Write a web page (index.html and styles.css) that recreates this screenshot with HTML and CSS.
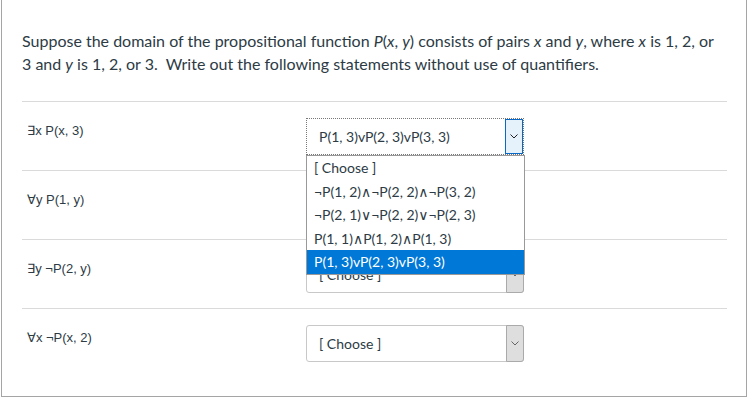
FILE: index.html
```html
<!DOCTYPE html>
<html lang="en">
<head>
    <meta charset="UTF-8">
    <title>Quiz question</title>
    <link rel="stylesheet" href="styles.css">
</head>
<body>
    <div class="question">
        <p class="prompt">Suppose the domain of the propositional function <i>P</i>(<i>x</i>, <i>y</i>) consists of pairs <i>x</i> and <i>y</i>, where <i>x</i> is 1, 2, or 3 and <i>y</i> is 1, 2, or 3.&nbsp; Write out the following statements without use of quantifiers.</p>

        <div class="answer-row">
            <div class="answer-label">∃x P(x, 3)</div>
            <div class="answer-cell">
                <div class="fake-select focused">
                    <span class="sel-text">P(1, 3)vP(2, 3)vP(3, 3)</span>
                    <span class="sel-arrow"><svg width="8" height="5" viewBox="0 0 8 5"><path d="M0.5 0.5 L4 4 L7.5 0.5" fill="none" stroke="#222" stroke-width="1"/></svg></span>
                </div>
                <ul class="dropdown">
                    <li>[ Choose ]</li>
                    <li>¬P(1, 2)∧¬P(2, 2)∧¬P(3, 2)</li>
                    <li>¬P(2, 1)∨¬P(2, 2)∨¬P(2, 3)</li>
                    <li>P(1, 1)∧P(1, 2)∧P(1, 3)</li>
                    <li class="active">P(1, 3)vP(2, 3)vP(3, 3)</li>
                </ul>
            </div>
        </div>

        <div class="answer-row">
            <div class="answer-label">∀y P(1, y)</div>
            <div class="answer-cell">
                <div class="fake-select">
                    <span class="sel-text">[ Choose ]</span>
                    <span class="sel-arrow"><svg width="8" height="5" viewBox="0 0 8 5"><path d="M0.5 0.5 L4 4 L7.5 0.5" fill="none" stroke="#666" stroke-width="1"/></svg></span>
                </div>
            </div>
        </div>

        <div class="answer-row">
            <div class="answer-label">∃y ¬P(2, y)</div>
            <div class="answer-cell">
                <div class="fake-select">
                    <span class="sel-text">[ Choose ]</span>
                    <span class="sel-arrow"><svg width="8" height="5" viewBox="0 0 8 5"><path d="M0.5 0.5 L4 4 L7.5 0.5" fill="none" stroke="#666" stroke-width="1"/></svg></span>
                </div>
            </div>
        </div>

        <div class="answer-row last">
            <div class="answer-label">∀x ¬P(x, 2)</div>
            <div class="answer-cell">
                <div class="fake-select">
                    <span class="sel-text">[ Choose ]</span>
                    <span class="sel-arrow"><svg width="8" height="5" viewBox="0 0 8 5"><path d="M0.5 0.5 L4 4 L7.5 0.5" fill="none" stroke="#666" stroke-width="1"/></svg></span>
                </div>
            </div>
        </div>
    </div>
</body>
</html>
```

FILE: styles.css
```css
body {
    margin: 0;
    background: #fff;
    font-family: Lato, "DejaVu Sans", sans-serif;
    color: #2d3b45;
}
.question {
    margin: 0 2px 0 1px;
    height: 397px;
    box-sizing: border-box;
    border: 1px solid #a5a5a5;
    border-top: none;
    padding: 0 19px 0 20px;
}
.prompt {
    margin: 0;
    padding: 29px 8px 26px 0;
    font-size: 16px;
    line-height: 23px;
}
.answer-row {
    display: flex;
    align-items: flex-start;
    border-top: 1px solid #dadada;
    padding: 16px 0 15px;
}
.answer-row.last { padding-bottom: 36px; }
.answer-label {
    width: 279px;
    padding: 5px 0 0 5px;
    font-family: "Liberation Sans", Arial, "DejaVu Sans", sans-serif;
    font-size: 13px;
    line-height: 16px;
    color: #2d3b45;
}
.answer-cell {
    position: relative;
}
.fake-select {
    display: flex;
    width: 218px;
    height: 37px;
    box-sizing: border-box;
    border: 1px solid #c8c8c8;
    border-radius: 3px;
    background: #fff;
}
.sel-text {
    flex: 1;
    padding-left: 12px;
    font-size: 14px;
    line-height: 35px;
    color: #2d3b45;
}
.sel-arrow {
    width: 16px;
    display: flex;
    align-items: center;
    justify-content: center;
    background: #dedede;
    border: 1px solid #aaa;
    margin: -1px -1px -1px 0;
    border-radius: 0 3px 3px 0;
}
.fake-select.focused {
    border: 1px dotted #777;
    border-radius: 0;
}
.fake-select.focused .sel-arrow {
    background: #e5f1fb;
    border: 1px solid #0a69c4;
    border-radius: 0;
    margin: 0;
}
.dropdown {
    position: absolute;
    z-index: 10;
    top: 37px;
    left: 0;
    width: 219px;
    box-sizing: border-box;
    margin: 0;
    padding: 0;
    list-style: none;
    background: #fff;
    border: 1px solid #999;
    font-size: 14px;
    color: #2d3b45;
}
.dropdown li {
    height: 23.6px;
    line-height: 23.6px;
    padding-left: 7px;
    white-space: nowrap;
}
.dropdown li.active {
    background: #0078d7;
    color: #fff;
}
```
